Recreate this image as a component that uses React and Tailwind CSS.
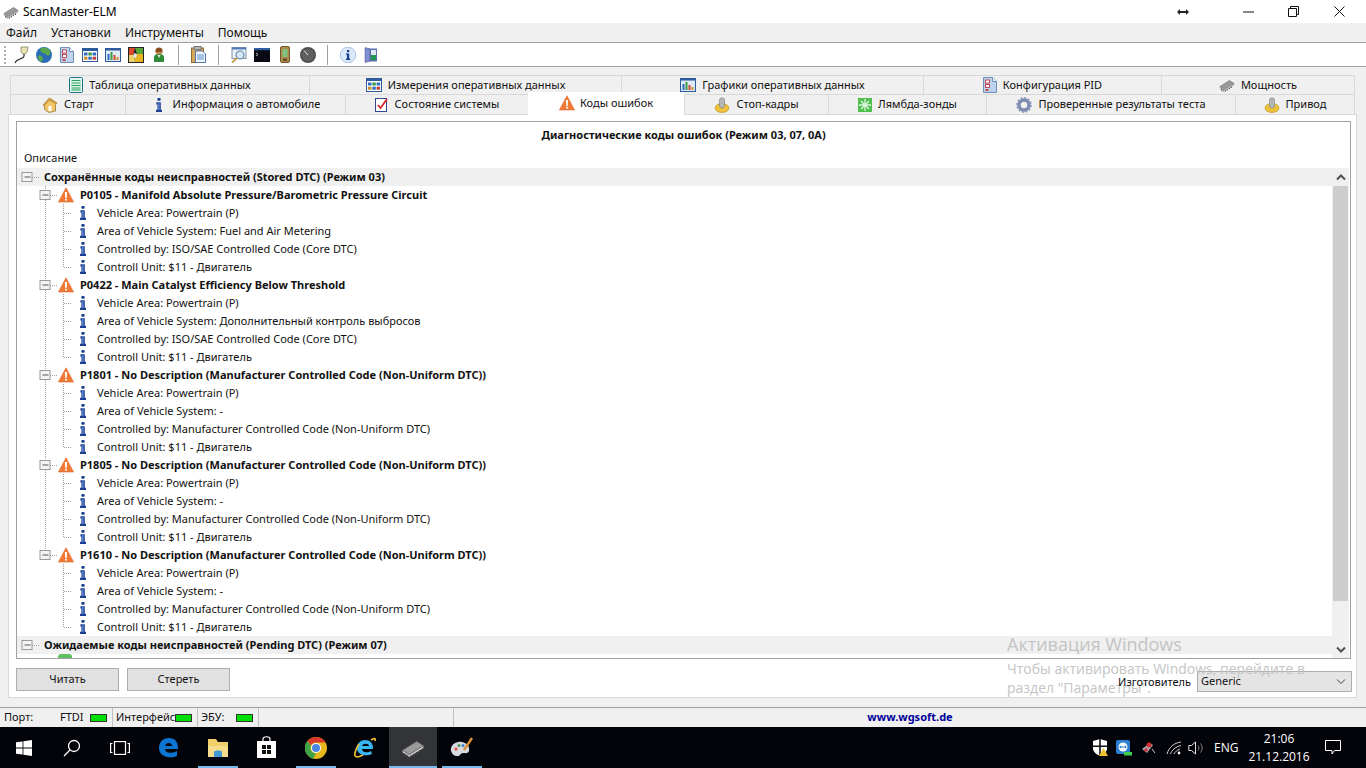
import React from 'react';

const Warn = ({ s = 16 }) => (
  <svg width={s} height={s} viewBox="0 0 16 16" className="shrink-0">
    <path d="M8 .8 15.6 15H.4z" fill="#f07a35" stroke="#e0662a" strokeWidth=".6" />
    <path d="M6.9 5h2.2l-.4 6H7.3z" fill="#fff" />
    <rect x="7.1" y="11.8" width="1.8" height="1.8" fill="#fff" />
  </svg>
);

const InfoI = ({ s = 16 }) => (
  <svg width={s} height={s} viewBox="0 0 16 16" className="shrink-0">
    <rect x="6.3" y="1" width="3.4" height="2.8" rx="1" fill="#1c3f94" />
    <path d="M5.4 5.2h4.4v7.6h1.2V15H5v-2.2h1.4V7.4h-1z" fill="#1c3f94" />
    <rect x="7.4" y="6" width="1" height="7" fill="#7fa8e8" />
  </svg>
);

const Chip = ({ w = 16, h = 16 }) => (
  <svg width={w} height={h} viewBox="0 0 16 16" className="shrink-0">
    <path d="M1 9.5 10.5 3.5 15 6.5 5.5 12.5z" fill="#9a9a9a" stroke="#555" strokeWidth=".5" />
    <path d="M1 9.5v1.5l4.5 3 9.5-6V6.5L5.5 12.5z" fill="#d4d4d4" stroke="#666" strokeWidth=".4" />
    <path d="M2.5 11.5v2M4 12.5v2M6.5 13v1.5M8.5 12v1.5M10.5 10.7v1.5M12.5 9.5V11" stroke="#444" strokeWidth=".8" />
  </svg>
);

const Cable = () => (
  <svg width="16" height="18" viewBox="0 0 16 18">
    <path d="M8 1h7l-1 5-2 2h-2L8 6z" fill="#e8e2b4" stroke="#77734f" strokeWidth=".7" />
    <path d="M11 8v2c0 2-2 2-4 3s-4 1-5 4" fill="none" stroke="#333" strokeWidth="1.2" />
  </svg>
);

const Globe = () => (
  <svg width="16" height="16" viewBox="0 0 16 16">
    <circle cx="8" cy="8" r="8" fill="#2b6db5" />
    <path d="M4 2c3-2 8-2 10 2 1 2 0 4-2 5-1-2-3-1-4-3-2 0-3 0-4-4zM2 9c2-1 4 0 5 2 0 2-1 3-2 4-2-1-3-3-3-6z" fill="#5ba84a" />
  </svg>
);

const DocCfg = () => (
  <svg width="14" height="16" viewBox="0 0 14 16">
    <path d="M.5.5h9l4 4v11H.5z" fill="#bcd3ee" stroke="#6f8db5" />
    <path d="M9.5.5v4h4" fill="#fff" stroke="#6f8db5" />
    <rect x="2.5" y="3" width="4" height="3" fill="#fff" stroke="#b23" strokeWidth=".8" />
    <rect x="2.5" y="7.5" width="4" height="3" fill="#fff" stroke="#b23" strokeWidth=".8" />
    <rect x="2.5" y="12" width="3" height="2" fill="#c44" />
  </svg>
);

const TableIco = () => (
  <svg width="16" height="14" viewBox="0 0 16 14">
    <rect x=".5" y=".5" width="15" height="13" fill="#fff" stroke="#2f5a9c" />
    <rect x=".5" y=".5" width="15" height="2.5" fill="#2f5a9c" />
    <rect x="2" y="4.5" width="3.5" height="3" fill="#2f6dc0" />
    <rect x="6.3" y="4.5" width="3.5" height="3" fill="#3f9a45" />
    <rect x="10.6" y="4.5" width="3.5" height="3" fill="#2f6dc0" />
    <rect x="2" y="8.7" width="3.5" height="3" fill="#c8902c" />
    <rect x="6.3" y="8.7" width="3.5" height="3" fill="#2f6dc0" />
    <rect x="10.6" y="8.7" width="3.5" height="3" fill="#c23b3b" />
  </svg>
);

const ChartIco = () => (
  <svg width="16" height="14" viewBox="0 0 16 14">
    <rect x=".5" y=".5" width="15" height="13" fill="#dfe8f5" stroke="#2f5a9c" />
    <rect x=".5" y=".5" width="15" height="2" fill="#2f5a9c" />
    <rect x="2.5" y="6" width="2" height="6" fill="#2f6dc0" />
    <rect x="5.5" y="4" width="2" height="8" fill="#3f9a45" />
    <rect x="8.5" y="7" width="2" height="5" fill="#d04a2f" />
    <rect x="11.5" y="9" width="2" height="3" fill="#c8902c" />
  </svg>
);

const MapIco = () => (
  <svg width="16" height="16" viewBox="0 0 16 16">
    <rect width="16" height="16" fill="#222" />
    <path d="M1 1h6L5 8H1z" fill="#d94a2a" />
    <path d="M7 1h8v6H9z" fill="#5aa53c" />
    <path d="M1 8h4l3 7H1z" fill="#e8d26a" />
    <path d="M5 8l4-1h6v8H8z" fill="#e8b423" />
    <path d="M6 6l3 1-1 4-3-1z" fill="#e8e8e8" />
  </svg>
);

const Person = () => (
  <svg width="12" height="16" viewBox="0 0 12 16">
    <circle cx="6" cy="4" r="3.6" fill="#8a4b1f" />
    <path d="M3 5h6v2H3z" fill="#c88a58" />
    <path d="M1 15V10c0-2 2-3 5-3s5 1 5 3v5z" fill="#2f8a3a" />
    <path d="M4.5 8 6 11l1.5-3z" fill="#e8f0e0" />
  </svg>
);

const Clipboard = () => (
  <svg width="15" height="17" viewBox="0 0 15 17">
    <rect x=".5" y="2" width="12" height="14.5" fill="#d9a65a" stroke="#8d6a33" />
    <rect x="3" y=".5" width="7" height="3" fill="#b9b9b9" stroke="#777" />
    <path d="M4.5 5h7l3 3v8.5h-10z" fill="#f3f8ff" stroke="#4f74a8" />
    <path d="M6 9h7M6 11h7M6 13h7" stroke="#5b8ccc" />
  </svg>
);

const Magnifier = () => (
  <svg width="16" height="16" viewBox="0 0 16 16">
    <rect x="1" y=".5" width="14" height="11" fill="#eef3f8" stroke="#7d93ad" />
    <rect x="1" y=".5" width="14" height="2" fill="#4f7db8" />
    <circle cx="9" cy="8" r="4" fill="#d5e8f8" stroke="#6a8aa8" strokeWidth="1.2" />
    <path d="M6 11 1 15.5" stroke="#c9a04e" strokeWidth="2" />
  </svg>
);

const Terminal = () => (
  <svg width="16" height="14" viewBox="0 0 16 14">
    <rect width="16" height="14" fill="#0a0a14" />
    <rect width="16" height="2.2" fill="#2f5f9f" />
    <path d="M2 5l2 1.5L2 8" fill="none" stroke="#ddd" strokeWidth=".8" />
  </svg>
);

const Phone = () => (
  <svg width="10" height="17" viewBox="0 0 10 17">
    <rect x=".5" y=".5" width="9" height="16" rx="1.5" fill="#b08a4a" stroke="#6c5a30" />
    <rect x="2.5" y="3" width="5" height="8" fill="#7fc27f" />
    <rect x="3" y="12.5" width="4" height="2.5" fill="#6c4a28" />
  </svg>
);

const Gauge = () => (
  <svg width="16" height="16" viewBox="0 0 16 16">
    <circle cx="8" cy="8" r="8" fill="#4d4d4d" />
    <circle cx="8" cy="8" r="6.4" fill="#5f5f5f" />
    <path d="M8 8 4 3.5" stroke="#e6e6e6" strokeWidth="1" />
  </svg>
);

const InfoRound = () => (
  <svg width="16" height="16" viewBox="0 0 16 16">
    <circle cx="8" cy="8" r="7.8" fill="#dbe8f8" stroke="#a9c4e6" />
    <rect x="7" y="3" width="2.2" height="2.2" fill="#1c3f94" />
    <path d="M6 6.4h3.2v5.2h1V13H6v-1.4h1V7.8H6z" fill="#1c3f94" />
  </svg>
);

const Door = () => (
  <svg width="14" height="16" viewBox="0 0 14 16">
    <rect x="1" y="1.5" width="12" height="13" fill="#5f6fb5" />
    <path d="M1 .5 6 2v12l-5 1.5z" fill="#7f8fd0" stroke="#444f8c" strokeWidth=".5" />
    <rect x="7" y="8" width="5" height="5" fill="#1f9a4a" />
    <rect x="7" y="3" width="5" height="5" fill="#dfe6f5" />
  </svg>
);

const ListIco = () => (
  <svg width="14" height="16" viewBox="0 0 14 16">
    <rect x=".5" y=".5" width="13" height="15" rx="1" fill="#e4f6ea" stroke="#1f6f8c" />
    <path d="M2.5 3.5h9M2.5 6h9M2.5 8.5h9M2.5 11h9M2.5 13h9" stroke="#21a05a" strokeWidth="1.2" />
  </svg>
);

const House = () => (
  <svg width="16" height="16" viewBox="0 0 16 16">
    <path d="M1 8 7.5 1 15 6l-1.5 1.5V14L7 15.5 2.5 12.5V9z" fill="#f0c668" stroke="#8d6a33" strokeWidth=".7" />
    <path d="M1 8 7.5 1 15 6 13.5 7.5 7.5 3.5 2.5 9z" fill="#cf9a3c" />
    <rect x="6.5" y="9" width="3" height="5" fill="#fff" />
  </svg>
);

const CheckDoc = () => (
  <svg width="14" height="15" viewBox="0 0 14 15">
    <rect x=".5" y="1.5" width="11" height="13" fill="#fff" stroke="#32458f" />
    <path d="M3 8l2.5 3L12 2" fill="none" stroke="#d4262c" strokeWidth="1.8" />
  </svg>
);

const Knob = () => (
  <svg width="16" height="16" viewBox="0 0 16 16">
    <ellipse cx="8" cy="11" rx="7" ry="4.5" fill="#edc13a" stroke="#b58b1c" strokeWidth=".6" />
    <rect x="5.5" y="1" width="5" height="10" rx="2" fill="#b6b6b6" stroke="#7c7c7c" strokeWidth=".6" />
  </svg>
);

const Lambda = () => (
  <svg width="14" height="14" viewBox="0 0 14 14">
    <rect width="14" height="14" fill="#4fc04f" />
    <path d="M7 1v12M1 7h12M3 3l8 8M11 3l-8 8" stroke="#dff5df" strokeWidth="1.3" />
  </svg>
);

const Gear = () => (
  <svg width="16" height="16" viewBox="0 0 16 16">
    <circle cx="8" cy="8" r="5" fill="none" stroke="#7d8bb0" strokeWidth="3.4" />
    <circle cx="8" cy="8" r="7" fill="none" stroke="#8f9cc0" strokeWidth="1.8" strokeDasharray="2 1.66" />
  </svg>
);

const TAB_ROW_1 = [
  { w: 'w-[299px]', label: 'Таблица оперативных данных', icon: <ListIco /> },
  { w: 'w-[312px]', label: 'Измерения оперативных данных', icon: <TableIco /> },
  { w: 'w-[302px]', label: 'Графики оперативных данных', icon: <ChartIco /> },
  { w: 'w-[238px]', label: 'Конфигурация PID', icon: <DocCfg /> },
  { w: 'w-[194px]', label: 'Мощность', icon: <Chip /> },
];

const TAB_ROW_2 = [
  { w: 'w-[115px]', label: 'Старт', icon: <House /> },
  { w: 'w-[220px]', label: 'Информация о автомобиле', icon: <InfoI /> },
  { w: 'w-[183px]', label: 'Состояние системы', icon: <CheckDoc /> },
  { w: 'w-[156px]', label: 'Коды ошибок', icon: <Warn />, active: true },
  { w: 'w-[144px]', label: 'Стоп-кадры', icon: <Knob /> },
  { w: 'w-[158px]', label: 'Лямбда-зонды', icon: <Lambda /> },
  { w: 'w-[249px]', label: 'Проверенные результаты теста', icon: <Gear /> },
  { w: 'w-[120px]', label: 'Привод', icon: <Knob /> },
];

const NONUNIFORM = 'Manufacturer Controlled Code (Non-Uniform DTC)';
const leaves = (system, control) => [
  'Vehicle Area: Powertrain (P)',
  `Area of Vehicle System: ${system}`,
  `Controlled by: ${control}`,
  'Controll Unit: $11 - Двигатель',
];

const DTCS = [
  { title: 'P0105 - Manifold Absolute Pressure/Barometric Pressure Circuit', items: leaves('Fuel and Air Metering', 'ISO/SAE Controlled Code (Core DTC)') },
  { title: 'P0422 - Main Catalyst Efficiency Below Threshold', items: leaves('Дополнительный контроль выбросов', 'ISO/SAE Controlled Code (Core DTC)') },
  { title: `P1801 - No Description (${NONUNIFORM.replace('Manufacturer Controlled Code (Non-Uniform DTC)', 'Manufacturer Controlled Code (Non-Uniform DTC)')})`, items: leaves('-', NONUNIFORM) },
  { title: `P1805 - No Description (${NONUNIFORM})`, items: leaves('-', NONUNIFORM) },
  { title: `P1610 - No Description (${NONUNIFORM})`, items: leaves('-', NONUNIFORM) },
];

const DOTS = { stroke: '#a0a0a0', strokeDasharray: '1 1', fill: 'none' };

const MinusBox = ({ cx }) => (
  <g>
    <rect x={cx - 5} y="4.5" width="10" height="9" fill="#f4f4f4" stroke="#9a9a9a" />
    <path d={`M${cx - 2.5} 9h6`} stroke="#555" />
  </g>
);

function GroupRow({ title }) {
  return (
    <div className="flex h-[18px] w-[1315px] shrink-0 items-center bg-[#f0f0f0]">
      <svg width="27" height="18" className="shrink-0">
        <path d="M15 9.5h8" {...DOTS} />
        <MinusBox cx={10} />
      </svg>
      <span className="font-bold whitespace-nowrap">{title}</span>
    </div>
  );
}

function DtcRow({ title, last }) {
  return (
    <div className="flex h-[18px] shrink-0 items-center">
      <svg width="41" height="18" className="shrink-0">
        <path d={last ? 'M28.5 0v4' : 'M28.5 0v4M28.5 14v4'} {...DOTS} />
        <path d="M33 9.5h8" {...DOTS} />
        <MinusBox cx={28} />
      </svg>
      <Warn />
      <span className="ml-[6px] font-bold whitespace-nowrap">{title}</span>
    </div>
  );
}

function LeafRow({ text, end, last }) {
  return (
    <div className="flex h-[18px] shrink-0 items-center">
      <svg width="58" height="18" className="shrink-0">
        {!end && <path d="M28.5 0v18" {...DOTS} />}
        <path d={last ? 'M46.5 0v9.5' : 'M46.5 0v18'} {...DOTS} />
        <path d="M47 9.5h8" {...DOTS} />
      </svg>
      <InfoI />
      <span className="ml-[6px] whitespace-nowrap">{text}</span>
    </div>
  );
}

function Tab({ tab, rowH }) {
  if (tab.active) {
    return (
      <div className={`${tab.w} relative z-10 -mt-[2px] -mb-[3px] flex h-[25px] items-center justify-center gap-[5px] bg-white pb-[3px]`}>
        {tab.icon}
        <span>{tab.label}</span>
      </div>
    );
  }
  return (
    <div className={`${tab.w} ${rowH} flex items-center justify-center gap-[6px] border-t border-l border-[#d9d9d9] last:border-r`}>
      {tab.icon}
      <span className="whitespace-nowrap">{tab.label}</span>
    </div>
  );
}

const Sep = () => <div className="mx-[8px] h-[20px] w-px bg-[#a0a0a0]" />;

const Tool = ({ children }) => <div className="flex w-[23px] justify-center">{children}</div>;

const Chevron = ({ up, color = '#505050', w = '2' }) => (
  <svg width="12" height="8" viewBox="0 0 12 8">
    <path d={up ? 'M2 6.5 6 2.5l4 4' : 'M2 1.5l4 4 4-4'} fill="none" stroke={color} strokeWidth={w} />
  </svg>
);

const TrayText = 'text-white font-["Open_Sans",sans-serif]';

function Taskbar() {
  return (
    <div className="flex h-[41px] w-full shrink-0 items-center bg-[#03030a] text-white">
      <div className="flex h-full w-[48px] items-center justify-center">
        <svg width="16" height="16" viewBox="0 0 16 16" fill="#fff">
          <path d="M0 2.3 6.6 1.4v6.2H0zM7.4 1.3 16 0v7.6H7.4zM0 8.4h6.6v6.2L0 13.7zM7.4 8.4H16V16l-8.6-1.3z" />
        </svg>
      </div>
      <div className="flex h-full w-[48px] items-center justify-center">
        <svg width="18" height="18" viewBox="0 0 18 18" fill="none" stroke="#fff" strokeWidth="1.3">
          <circle cx="11" cy="7" r="5.5" />
          <path d="M7 11 1 17" />
        </svg>
      </div>
      <div className="flex h-full w-[48px] items-center justify-center">
        <svg width="20" height="14" viewBox="0 0 20 14" fill="none" stroke="#fff" strokeWidth="1.2">
          <rect x="4.5" y=".6" width="11" height="12.8" />
          <path d="M2.5 2.5H.6v9h1.9M17.5 2.5h1.9v9h-1.9" />
        </svg>
      </div>
      <TaskItem><svg width="21" height="21" viewBox="0 0 21 21"><path d="M1 11C1 5 5 1 11 1c6 0 9 4 9 10v1H7c0 4 7 5 12 2v5c-7 3-18 1-18-8zm6-2h7c0-4-6-4-7 0z" fill="#0b75d1" /></svg></TaskItem>
      <TaskItem line="w-[40px]"><svg width="22" height="20" viewBox="0 0 22 20"><path d="M1 1h8l2 3h10v15H1z" fill="#f2cf6d" /><path d="M1 8h20v11H1z" fill="#f7dc8c" /><path d="M7 19v-5c0-2 8-2 8 0v5z" fill="#3f9ad6" /></svg></TaskItem>
      <TaskItem><svg width="21" height="23" viewBox="0 0 21 23"><path d="M7 5V3c0-3 7-3 7 0v2" fill="none" stroke="#fff" strokeWidth="1.2" /><path d="M1 5h19v17H1z" fill="#fff" /><path d="M6 9h4v4H6zM11 9h4v4h-4zM6 14h4v4H6zM11 14h4v4h-4z" fill="#111" /></svg></TaskItem>
      <TaskItem line="w-[40px]"><svg width="22" height="22" viewBox="0 0 22 22"><circle cx="11" cy="11" r="11" fill="#e8b81e" /><path d="M11 0a11 11 0 0 1 9.5 5.5H11a5.5 5.5 0 0 0-5 3L2.500 4A11 11 0 0 1 11 0z" fill="#d9382c" /><path d="M2.500 4 6 8.500A5.500 5.500 0 0 0 11 16.500L8 21.700A11 11 0 0 1 2.500 4z" fill="#3fa34a" /><circle cx="11" cy="11" r="5" fill="#fff" /><circle cx="11" cy="11" r="4" fill="#4a86e0" /></svg></TaskItem>
      <TaskItem><svg width="22" height="22" viewBox="0 0 22 22"><path d="M3 11C3 6 7 3 11 3c5 0 8 3 8 8v1H8c0 4 6 4 9 2l1 3c-6 3-15 1-15-6zm5-2h7c0-3-6-3-7 0z" fill="#38b6ef" /><path d="M17 3c3-2 5-2 4 1M5 7C1 13-1 20 3 20c2 0 4-1 6-2" fill="none" stroke="#f2c230" strokeWidth="1.6" /></svg></TaskItem>
      <div className="flex h-full w-[48px] flex-col items-center justify-between bg-[#333437]">
        <div className="flex flex-1 items-center justify-center pt-[2px]"><Chip w={24} h={24} /></div>
        <div className="h-[2px] w-full bg-[#76b9ed]" />
      </div>
      <div className="ml-[5px] flex h-full w-[40px] flex-col items-center justify-between">
        <div className="flex flex-1 items-center justify-center pt-[2px]">
          <svg width="24" height="22" viewBox="0 0 24 22">
            <path d="M1 14C0 8 6 4 12 5c5 1 8 4 7 9-1 3-4 2-6 2-3 0-3 4-6 3-3 0-5-2-6-5z" fill="#d9d9e0" />
            <circle cx="6" cy="12" r="1.500" fill="#e0483c" /><circle cx="9" cy="8.500" r="1.500" fill="#4a9a4a" /><circle cx="13" cy="8.500" r="1.500" fill="#3f7fd0" />
            <path d="M14 13 22 1" stroke="#d9923c" strokeWidth="2.4" />
          </svg>
        </div>
        <div className="h-[2px] w-full bg-[#76b9ed]" />
      </div>

      <div className="ml-auto flex h-full items-center">
        <svg width="16" height="17" viewBox="0 0 16 17" className="mr-[8px]">
          <path d="M1 2 8 0l7 2v7c0 4-3 6-7 8-4-2-7-4-7-8z" fill="#fff" />
          <path d="M7.200 0h1.600v17H7.200zM1 6.500h14v1.500H1z" fill="#111" />
          <path d="M11.500 9 16 17H7z" fill="#f2c230" />
        </svg>
        <svg width="16" height="16" viewBox="0 0 16 16" className="mr-[9px]">
          <rect width="14" height="14" rx="2" fill="#2a7fd0" />
          <circle cx="7" cy="7" r="4.500" fill="#fff" />
          <path d="M3 7l2-1.500V6.500h4V5.500L11 7 9 8.500V7.500H5v1z" fill="#2a7fd0" />
          <rect x="8" y="12" width="8" height="3.500" fill="#3fcf4f" />
        </svg>
        <svg width="15" height="15" viewBox="0 0 15 15" className="mr-[10px]">
          <path d="M1 9 9 3l3 2-6 8z" fill="#a8a8b0" />
          <circle cx="8" cy="5" r="2.500" fill="#d12f2f" />
          <circle cx="5" cy="10" r="1.800" fill="#d12f2f" />
          <path d="M11 9l3 4" stroke="#ccc" />
        </svg>
        <svg width="16" height="14" viewBox="0 0 16 14" fill="none" stroke="#cfcfcf" className="mr-[6px]">
          <path d="M1 13C3 6 8 2 15 1M4.500 13C6 9 9 6 15 4.500M8 13c1-2 3-4 6-5" />
          <circle cx="13" cy="12" r="1.400" fill="#fff" stroke="none" />
        </svg>
        <svg width="17" height="14" viewBox="0 0 17 14" fill="none" stroke="#e0e0e0" className="mr-[9px]">
          <path d="M.8 4.500h2.700L7.500 1v12L3.500 9.500H.8z" />
          <path d="M10 4.500c1.200 1.500 1.200 3.500 0 5M12.500 2.500c2.200 3 2.200 6 0 9" stroke="#8a8a8a" />
        </svg>
        <span className={`${TrayText} w-[26px] text-[12px]`}>ENG</span>
        <div className={`${TrayText} ml-[8px] flex w-[62px] flex-col items-center text-[12px] leading-[18px]`}>
          <span>21:06</span>
          <span>21.12.2016</span>
        </div>
        <svg width="16" height="15" viewBox="0 0 16 15" fill="none" stroke="#fff" className="mr-[25px] ml-[15px]">
          <path d="M.5.5h15v10H9.500L7 14v-3.500H.5z" />
        </svg>
      </div>
    </div>
  );
}

function TaskItem({ children, line }) {
  return (
    <div className="flex h-full w-[49px] flex-col items-center justify-between">
      <div className="flex flex-1 items-center justify-center pt-[2px]">{children}</div>
      <div className={`h-[2px] ${line ? `${line} bg-[#76b9ed]` : 'bg-transparent'}`} />
    </div>
  );
}

export default function App() {
  return (
    <div className="relative flex h-[768px] w-[1366px] flex-col overflow-hidden bg-[#f0f0f0] font-['Noto_Sans',sans-serif] text-[11px] text-[#111]">
      {/* Title bar */}
      <div className="flex h-[23px] shrink-0 items-center bg-white pl-[3px] text-[12px]">
        <Chip />
        <span className="ml-[4px] text-black">ScanMaster-ELM</span>
        <svg width="12" height="8" viewBox="0 0 12 8" className="ml-[1060px]">
          <path d="M0 4l3-3v2h6V1l3 3-3 3V5H3v2z" fill="#222" />
        </svg>
        <svg width="11" height="2" viewBox="0 0 11 2" className="ml-[54px]"><path d="M0 1h11" stroke="#111" /></svg>
        <svg width="11" height="11" viewBox="0 0 11 11" fill="none" stroke="#111" className="ml-[34px]">
          <path d="M2.500 2.500V.5h8v8h-2M.5 2.500h8v8h-8z" />
        </svg>
        <svg width="11" height="11" viewBox="0 0 11 11" fill="none" stroke="#111" className="ml-[35px]">
          <path d="M.5.500l10 10M10.500.500l-10 10" />
        </svg>
      </div>

      {/* Menu */}
      <div className="flex h-[20px] shrink-0 items-center border-b border-[#a0a0a0] text-[12px]">
        <span className="ml-[6px]">Файл</span>
        <span className="ml-[14px]">Установки</span>
        <span className="ml-[14px]">Инструменты</span>
        <span className="ml-[14px]">Помощь</span>
      </div>

      {/* Toolbar */}
      <div className="flex h-[24px] shrink-0 items-center border-b border-[#a0a0a0] bg-white pl-[4px]">
        <div className="mr-[2px] h-[18px] w-[3px] border-l-2 border-dotted border-[#b0b0b0]" />
        <Tool><Cable /></Tool>
        <Tool><Globe /></Tool>
        <Tool><DocCfg /></Tool>
        <Tool><TableIco /></Tool>
        <Tool><ChartIco /></Tool>
        <Tool><MapIco /></Tool>
        <Tool><Person /></Tool>
        <Sep />
        <Tool><Clipboard /></Tool>
        <Sep />
        <Tool><Magnifier /></Tool>
        <Tool><Terminal /></Tool>
        <Tool><Phone /></Tool>
        <Tool><Gauge /></Tool>
        <Sep />
        <Tool><InfoRound /></Tool>
        <Tool><Door /></Tool>
      </div>

      {/* Tabs */}
      <div className="mt-[8px] ml-[10px] flex w-[1345px] shrink-0 flex-col">
        <div className="flex">
          {TAB_ROW_1.map(t => <Tab key={t.label} tab={t} rowH="h-[19px]" />)}
        </div>
        <div className="flex">
          {TAB_ROW_2.map(t => <Tab key={t.label} tab={t} rowH="h-[20px]" />)}
        </div>
      </div>

      {/* Panel */}
      <div className="ml-[8px] h-[584px] w-[1349px] shrink-0 border border-[#d9d9d9] bg-white px-[7px] pt-[6px]">
        <div className="flex h-[538px] w-[1335px] flex-col overflow-hidden border border-[#a0a0a0]">
          <div className="flex h-[26px] shrink-0 items-center justify-center font-bold">
            Диагностические коды ошибок (Режим 03, 07, 0A)
          </div>
          <div className="flex h-[20px] shrink-0 items-center pl-[7px]">Описание</div>
          <div className="flex min-h-0 flex-1">
            <div className="flex w-[1315px] flex-col overflow-hidden">
              <GroupRow title="Сохранённые коды неисправностей (Stored DTC) (Режим 03)" />
              {DTCS.map((d, di) => (
                <React.Fragment key={d.title}>
                  <DtcRow title={d.title} last={di === DTCS.length - 1} />
                  {d.items.map((text, i) => (
                    <LeafRow key={text} text={text} end={di === DTCS.length - 1} last={i === 3} />
                  ))}
                </React.Fragment>
              ))}
              <GroupRow title="Ожидаемые коды неисправностей (Pending DTC) (Режим 07)" />
              <div className="flex h-[18px] shrink-0 items-start pl-[41px]">
                <div className="h-[5px] w-[14px] rounded-t-[3px] bg-[#5fc05f]" />
              </div>
            </div>
            <div className="flex w-[17px] flex-col items-center bg-[#f0f0f0]">
              <div className="flex h-[18px] shrink-0 items-center justify-center"><Chevron up /></div>
              <div className="h-[415px] w-[15px] shrink-0 bg-[#cdcdcd]" />
              <div className="flex flex-1 items-end justify-center pb-[4px]"><Chevron /></div>
            </div>
          </div>
        </div>

        <div className="mt-[9px] flex items-start">
          <button className="h-[23px] w-[103px] border border-[#adadad] bg-[#e1e1e1]">Читать</button>
          <button className="ml-[8px] h-[23px] w-[103px] border border-[#adadad] bg-[#e1e1e1]">Стереть</button>
          <span className="relative z-10 mt-[6px] ml-auto">Изготовитель</span>
          <div className="mt-[3px] ml-[6px] mr-[-3px] flex h-[21px] w-[155px] items-center justify-between border border-[#adadad] bg-[#e4e4e4] pr-[4px] pl-[3px]">
            <span>Generic</span>
            <Chevron color="#444" w="1" />
          </div>
        </div>
      </div>

      {/* Activation watermark */}
      <div className="pointer-events-none absolute top-[632px] left-[1007px] font-['Open_Sans',sans-serif] text-[#c4c4c4]">
        <div className="text-[18px] leading-[24px]">Активация Windows</div>
        <div className="mt-[3px] text-[14px] leading-[19px]">Чтобы активировать Windows, перейдите в</div>
        <div className="text-[14px] leading-[19px]">раздел "Параметры".</div>
      </div>

      {/* Status bar */}
      <div className="mt-[9px] flex h-[20px] shrink-0 border-t border-[#a0a0a0]">
        <div className="flex w-[113px] items-center border-r border-[#c0c0c0] pl-[4px]">
          <span className="w-[56px]">Порт:</span>
          <span className="w-[30px]">FTDI</span>
          <div className="h-[8px] w-[17px] border border-[#333] bg-[#00e000]" />
        </div>
        <div className="flex w-[85px] items-center border-r border-[#c0c0c0] pl-[3px]">
          <span className="w-[59px] overflow-hidden whitespace-nowrap">Интерфейс:</span>
          <div className="h-[8px] w-[17px] border border-[#333] bg-[#00e000]" />
        </div>
        <div className="flex w-[61px] items-center border-r border-[#c0c0c0] pl-[3px]">
          <span className="w-[35px]">ЭБУ:</span>
          <div className="h-[8px] w-[17px] border border-[#333] bg-[#00e000]" />
        </div>
        <div className="w-[195px] border-r border-[#c0c0c0]" />
        <div className="flex flex-1 items-center justify-center font-bold text-[#00009a]">www.wgsoft.de</div>
      </div>

      <Taskbar />
    </div>
  );
}
